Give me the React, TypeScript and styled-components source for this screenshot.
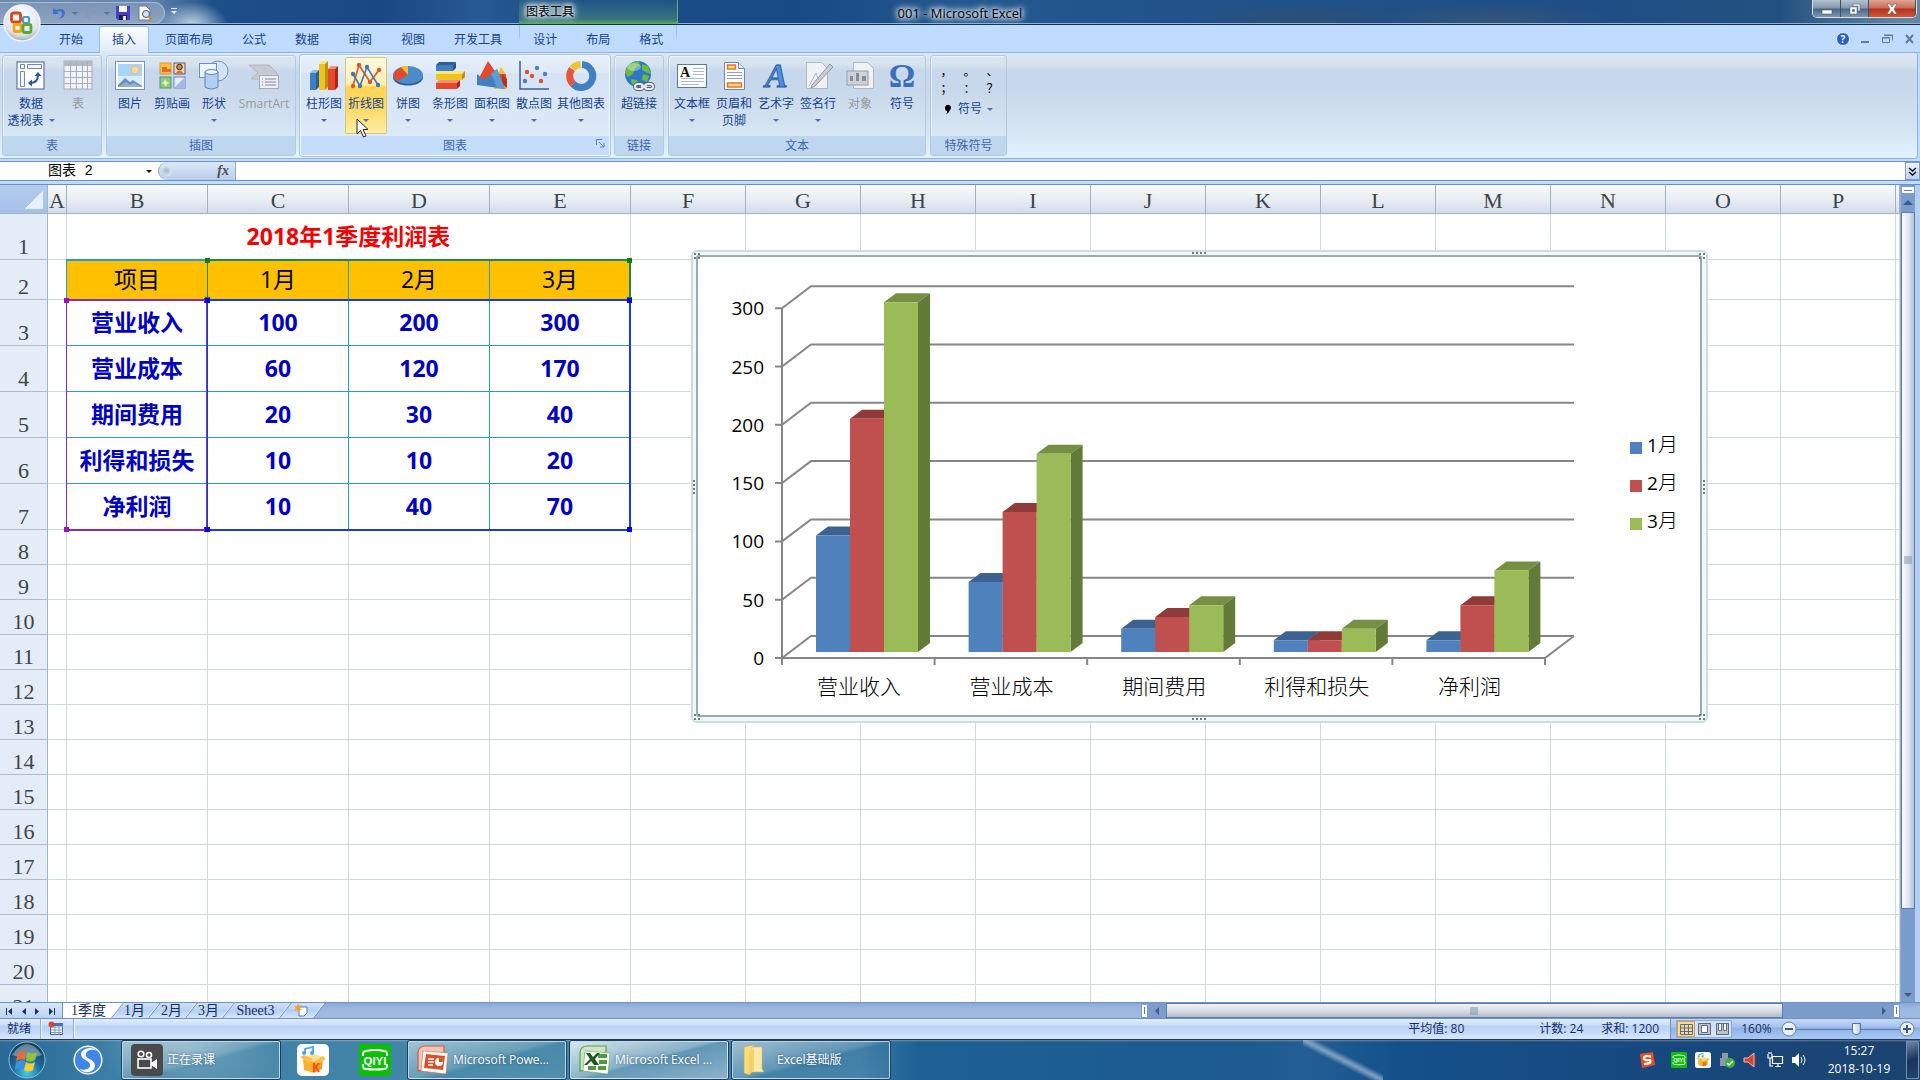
import React from "react";
import styled, { createGlobalStyle, css } from "styled-components";

const UI = `"Open Sans", "Noto Sans CJK SC", sans-serif`;
const SONG = `"Liberation Serif", "Noto Sans CJK SC", serif`;

const Global = createGlobalStyle`
  * { box-sizing: border-box; }
  html, body { margin: 0; padding: 0; }
  body { font-family: ${UI}; font-size: 12px; line-height: 16px; color: #15428b; overflow: hidden; }
  button, input, select { font: inherit; color: inherit; border: 0; background: none; padding: 0; margin: 0; border-radius: 0; outline: 0; }
  svg { display: block; flex: none; overflow: visible; }
`;

const Screen = styled.div`
  height: 100vh;
  display: flex;
  flex-direction: column;
  background: #bfdbff;
  overflow: hidden;
`;

/* ---------- title bar ---------- */
const TitleBar = styled.header`
  position: relative;
  height: 25px;
  flex: none;
  display: flex;
  align-items: stretch;
  border-bottom: 1px solid #1b2c48;
  box-shadow: inset 0 -1px 0 #8fb0d6;
  background:
    radial-gradient(ellipse 36px 22px at 192px 24px, rgba(190, 216, 228, 0.95), transparent),
    radial-gradient(ellipse 110px 14px at 1300px 18px, rgba(60, 80, 100, 0.5), transparent),
    radial-gradient(ellipse 120px 14px at 1490px 18px, rgba(70, 90, 110, 0.55), transparent),
    linear-gradient(90deg, #6d8cb1 0, #6585b0 150px, #1d4f88 215px, #1a4882 380px, #285a94 480px, #1b4c86 560px, #184a84 800px, #24588f 960px, #205188 1300px, #1f4e86 1600px, #23517f 1780px, #6486a0 1900px);
`;
const QuickAccess = styled.div`
  display: flex;
  align-items: center;
  gap: 4px;
  width: 165px;
  margin-top: 2px;
  height: 22px;
  padding-left: 50px;
  border: 1px solid #a9bad0;
  border-left: 0;
  border-radius: 0 11px 11px 0;
  background: linear-gradient(#7b93b5, #8ea4c2);
`;
const QuickButton = styled.button<{ $w?: number }>`
  width: ${(p) => p.$w ?? 18}px;
  height: 18px;
  display: grid;
  place-items: center;
`;
const CustomizeButton = styled(QuickButton)`
  height: 24px;
`;
const Orb = styled.button`
  position: absolute;
  left: 3px;
  top: 4px;
  z-index: 4;
  width: 38px;
  height: 38px;
`;
const ContextTitle = styled.div`
  position: absolute;
  left: 519px;
  top: 0;
  width: 159px;
  height: 24px;
  padding: 4px 7px;
  color: #000;
  border-right: 1px solid #6fa58c;
  background: linear-gradient(rgba(60, 130, 140, 0.15), rgba(84, 150, 120, 0.55) 82%, #5cb04c);
`;
const Glow = styled.span`
  text-shadow: 0 0 4px #fff, 0 0 6px #fff, 0 0 8px #e4eef8, 0 0 10px #cfe0f0;
`;
const WindowTitle = styled.h1`
  position: absolute;
  left: 0;
  right: 0;
  top: 5px;
  margin: 0;
  text-align: center;
  font-size: 13px;
  font-weight: 400;
  line-height: 16px;
  color: #000;
  pointer-events: none;
`;
const WindowButtons = styled.div`
  margin-left: auto;
  margin-right: 3px;
  height: 18px;
  display: flex;
  border: 1px solid #d4dde8;
  border-top: 0;
  border-radius: 0 0 5px 5px;
  overflow: hidden;
`;
const WindowButton = styled.button<{ $close?: boolean }>`
  width: ${(p) => (p.$close ? 47 : 28)}px;
  display: grid;
  place-items: center;
  border-right: 1px solid #3c506c;
  background: ${(p) =>
    p.$close
      ? "linear-gradient(#dca596, #cd6a55 48%, #b5311f 52%, #d0553a)"
      : "linear-gradient(#b4c2d2, #8296ae 48%, #4c6685 52%, #7c97b3)"};
`;

/* ---------- tabs ---------- */
const TabRow = styled.nav`
  height: 28px;
  flex: none;
  display: flex;
  align-items: flex-end;
  gap: 7px;
  padding-left: 48px;
  background: #bfdbff;
  border-bottom: 1px solid #8db2e3;
`;
const Tab = styled.button<{ $active?: boolean }>`
  height: 25px;
  padding: 0 11px;
  white-space: nowrap;
  color: #15428b;
  ${(p) =>
    p.$active &&
    css`
      margin: 0 -1px -1px;
      padding: 0 12px 1px;
      height: 26px;
      border-radius: 3px 3px 0 0;
      background: linear-gradient(#fbfdff, #dfeaf6);
      box-shadow: inset 0 1px 0 #fff, 0 0 1px 1px #9dbce4;
      clip-path: inset(-3px -3px 0 -3px);
    `}
`;
const ContextTabs = styled.div`
  display: flex;
  align-items: flex-end;
  align-self: stretch;
  gap: 7px;
  margin-left: -1px;
  padding: 0 2px;
  border: solid transparent;
  border-width: 0 1px;
  border-image: linear-gradient(#9cc6cf 40%, transparent 60%) 1;
`;
const TabTools = styled.div`
  margin-left: auto;
  height: 26px;
  display: flex;
  align-items: center;
  gap: 8px;
  padding-right: 4px;
`;
const PlainButton = styled.button`
  display: grid;
  place-items: center;
`;

/* ---------- ribbon ---------- */
const Ribbon = styled.section`
  flex: none;
  height: 106px;
  margin: 0 2px 0 0;
  padding: 2px;
  display: flex;
  gap: 4px;
  border-right: 1px solid #8db2e3;
  border-bottom: 1px solid #8fb3dd;
  border-radius: 0 3px 4px 0;
  background: linear-gradient(#dbe8f3 0, #d5e3ee 12px, #c7d7ec 18px, #c9d9ec 40px, #d4e4f1 75px, #e1f3fe 105px);
`;
const Group = styled.div<{ $hot?: boolean }>`
  display: flex;
  flex-direction: column;
  height: 101px;
  border: 1px solid ${(p) => (p.$hot ? "#f2f9ff" : "#b3c9e2")};
  border-radius: 3px;
  box-shadow: ${(p) => (p.$hot ? "0 0 0 1px #a6c4e6" : "inset 1px 1px 0 rgba(255,255,255,.45)")};
  background: ${(p) =>
    p.$hot
      ? "linear-gradient(#e7f0fa 0, #dfe9f7 16px, #d5e3f5 18px, #dfecf8)"
      : "transparent"};
`;
const GroupBody = styled.div`
  flex: 1;
  display: flex;
  padding: 1px 2px;
`;
const GroupName = styled.div<{ $hot?: boolean }>`
  position: relative;
  height: 19px;
  line-height: 19px;
  text-align: center;
  color: #4066a8;
  border-radius: 0 0 2px 2px;
  background: ${(p) => (p.$hot ? "#c4ddfc" : "#bfd7ee")};
`;
const Launcher = styled.button`
  position: absolute;
  right: 4px;
  top: 3px;
`;
const BigButton = styled.button<{ $w?: number; $hot?: boolean; $off?: boolean }>`
  position: relative;
  width: ${(p) => p.$w ?? 42}px;
  height: 77px;
  padding-top: 3px;
  display: flex;
  flex-direction: column;
  align-items: center;
  gap: 3px;
  line-height: 17px;
  white-space: nowrap;
  color: ${(p) => (p.$off ? "#96989c" : "#15428b")};
  border-radius: 2px;
  ${(p) =>
    p.$hot &&
    css`
      background: linear-gradient(#fffbe0 0, #ffeeb0 28px, #ffd454 30px, #ffdc70 55px, #fff0a8);
      box-shadow: inset 0 0 0 1px #dbc681;
    `}
`;
const Lines = styled.span`
  display: flex;
  flex-direction: column;
  align-items: center;
`;
const Line = styled.span`
  display: flex;
  align-items: center;
  gap: 5px;
  min-height: 17px;
`;
const Caret = styled.i<{ $dark?: boolean }>`
  border: 3px solid transparent;
  border-top-color: ${(p) => (p.$dark ? "#111" : "#56709c")};
  border-bottom: 0;
`;
const Symbols = styled.div`
  display: grid;
  grid-template-columns: repeat(3, 23px);
  grid-template-rows: 17px 18px 22px;
  padding: 6px 0 0 2px;
  color: #000;
`;
const SymbolMenu = styled.button`
  grid-column: span 3;
  display: flex;
  align-items: center;
  gap: 5px;
  padding-left: 8px;
  color: #15428b;
`;
const Pointer = styled.span`
  position: absolute;
  left: 11px;
  top: 61px;
  z-index: 3;
`;

/* ---------- formula bar ---------- */
const FormulaBar = styled.div`
  flex: none;
  height: 20px;
  margin: 2px 0 3px;
  display: flex;
  border: solid #6c93c4;
  border-width: 1px 0;
  background: #fff;
`;
const NameBox = styled.input`
  width: 140px;
  padding-left: 48px;
  font-family: "Liberation Mono", "Noto Sans CJK SC", monospace;
  font-size: 14px;
  color: #000;
`;
const FxStrip = styled.div`
  width: 78px;
  display: flex;
  justify-content: space-between;
  align-items: center;
  padding: 0 6px 0 4px;
  border: 1px solid #8fa9ce;
  border-width: 0 1px;
  border-radius: 9px 0 0 9px;
  background: linear-gradient(#dce8f8, #b7cdeb);
`;
const Knob = styled.i`
  width: 9px;
  height: 9px;
  border-radius: 50%;
  background: radial-gradient(circle at 35% 40%, #a6b5c9, #f4f8fd);
`;
const Fx = styled.button`
  font-family: "Liberation Serif", serif;
  font-style: italic;
  font-weight: 700;
  font-size: 14px;
  line-height: 16px;
  color: #4a4f58;
`;
const FormulaInput = styled.input`
  flex: 1;
  min-width: 0;
  padding: 0 4px;
  color: #000;
`;
const Expand = styled.button`
  width: 15px;
  display: grid;
  place-items: center;
  border: 1px solid #7f9ec9;
  background: linear-gradient(#eaf2fd, #bcd2f0);
`;

/* ---------- sheet ---------- */
const Work = styled.main`
  flex: 1;
  min-height: 0;
  display: flex;
  border-top: 1px solid #6c8ebf;
  background: #bfdbff;
`;
const Sheet = styled.div`
  position: relative;
  flex: 1;
  min-width: 0;
  overflow: hidden;
  background: #fff;
`;
const Grid = styled.table`
  width: 100%;
  table-layout: fixed;
  border-collapse: separate;
  border-spacing: 0;
  th, td { padding: 0; overflow: hidden; white-space: nowrap; }
`;
const ColHead = styled.th`
  height: 29px;
  font: 400 22px/24px ${SONG};
  vertical-align: bottom;
  color: #3c444c;
  border-right: 1px solid #a5b1c0;
  border-bottom: 1px solid #9eb6ce;
  background: linear-gradient(#f8fbfd, #e9eef4 50%, #d3dce8);
`;
const Corner = styled.th`
  border-right: 1px solid #9eb6ce;
  border-bottom: 1px solid #9eb6ce;
  background: linear-gradient(135deg, transparent 50%, #e6effa 51%) 24px 6px / 19px 18px no-repeat, linear-gradient(#b4cdec, #a4c0e8);
`;
const RowHead = styled.th`
  font: 400 22px/24px ${SONG};
  vertical-align: bottom;
  color: #3c444c;
  border-right: 1px solid #9eb6ce;
  border-bottom: 1px solid #aebccb;
  background: #e4ecf7;
`;
const Row = styled.tr<{ $h: number }>`
  height: ${(p) => p.$h}px;
`;
const Cell = styled.td<{ $kind?: "title" | "head" | "data" }>`
  border-right: 1px solid #d2d8e0;
  border-bottom: 1px solid #d2d8e0;
  && { padding-bottom: 2px; }
  text-align: center;
  font-size: 23px;
  line-height: 32px;
  ${(p) => p.$kind === "title" && css`color: #f40000; font-weight: 700; border-bottom-color: #2a9cc0;`}
  ${(p) => p.$kind === "head" && css`color: #000; background: #ffc000; border-color: #2a9cc0;`}
  ${(p) => p.$kind === "data" && css`color: #0000c0; font-weight: 700; border-color: #2a9cc0;`}
`;
const RangeFrame = styled.div<{ $x: number; $y: number; $w: number; $h: number; $line: string; $handle: string }>`
  position: absolute;
  left: ${(p) => p.$x}px;
  top: ${(p) => p.$y}px;
  width: ${(p) => p.$w}px;
  height: ${(p) => p.$h}px;
  border: 2px solid ${(p) => p.$line};
  border-left-width: 1px;
  pointer-events: none;
  &::after {
    content: "";
    position: absolute;
    inset: -3px;
    --d: linear-gradient(${(p) => p.$handle}, ${(p) => p.$handle});
    background: var(--d) 0 0 / 5px 5px, var(--d) 100% 0 / 5px 5px, var(--d) 0 100% / 5px 5px, var(--d) 100% 100% / 5px 5px;
    background-repeat: no-repeat;
  }
`;
const ChartFrame = styled.figure`
  position: absolute;
  left: 691px;
  top: 65px;
  margin: 0;
`;

/* ---------- scroll bars ---------- */
const VScroll = styled.div`
  width: 20px;
  flex: none;
  display: flex;
  flex-direction: column;
  align-items: stretch;
  gap: 2px;
  padding: 1px 5px 0 1px;
  background: linear-gradient(90deg, #8fadd8 0 1px, #7c9ccb 1px 15px, #b4cff2 15px);
`;
const SplitBox = styled.div<{ $side?: boolean }>`
  flex: none;
  background: #fff;
  border: 1px solid #7c9ccb;
  display: grid;
  place-items: center;
  ${(p) => (p.$side ? "width: 7px; height: 14px;" : "height: 8px;")}
`;
const ScrollArrow = styled.button`
  flex: none;
  width: 14px;
  height: 14px;
  display: grid;
  place-items: center;
`;
const VTrack = styled.div`
  flex: 1;
  min-height: 0;
`;
const VThumb = styled.div`
  height: 90%;
  display: grid;
  place-items: center;
  border: 1px solid #5c7dab;
  border-radius: 1px;
  background: linear-gradient(90deg, #fbfcfe, #e0e7f0 50%, #b6c3d6);
`;
const Bottom = styled.div`
  flex: none;
  height: 17px;
  display: flex;
  align-items: stretch;
  border-top: 1px solid #6d92c4;
  border-bottom: 1px solid #6d92c4;
  background: linear-gradient(#8ba9d6, #9db8e0 40%, #9fb9df);
`;
const TabNav = styled.div`
  width: 63px;
  display: flex;
  justify-content: space-between;
  padding: 0 6px 0 5px;
  background: linear-gradient(#d8e6f8, #bcd3f1);
  border-right: 1px solid #6d92c4;
`;
const SheetTab = styled.button<{ $w: number; $active?: boolean }>`
  position: relative;
  z-index: 0;
  width: ${(p) => p.$w}px;
  display: flex;
  align-items: center;
  justify-content: center;
  padding-right: 4px;
  font: 400 14px/15px ${SONG};
  color: #15305e;
  &::before {
    content: "";
    position: absolute;
    z-index: -1;
    inset: 0 ${(p) => (p.$active ? "0 0 -8px" : "0")};
    transform: skewX(-38deg);
    border-right: 1px solid #6d8fc0;
    box-shadow: inset -1px 0 0 #eef5ff;
    background: ${(p) => (p.$active ? "#fff" : "linear-gradient(#cfe0f7, #b7d0f2 50%, #d5e5fa)")};
  }
`;
const SheetTabs = styled.div`
  display: flex;
  overflow: hidden;
  padding-right: 12px;
`;
const HScroll = styled.div`
  width: 759px;
  margin-left: auto;
  margin-right: 20px;
  display: flex;
  align-items: center;
  gap: 2px;
  background: #7c9ccb;
`;
const HTrack = styled.div`
  flex: 1;
  align-self: stretch;
`;
const HThumb = styled.div`
  width: 87%;
  height: 15px;
  display: grid;
  place-items: center;
  border: 1px solid #5c7dab;
  background: linear-gradient(#f0f3f8, #dce1e9 45%, #b3bccb);
`;

/* ---------- status bar ---------- */
const StatusBar = styled.footer`
  flex: none;
  height: 21px;
  display: flex;
  align-items: center;
  color: #0e2f6c;
  background: linear-gradient(#e0edfd 0, #cbdff8 6px, #b6d0f5 7px, #c9dcf7 14px, #d8e6fa);
  border-bottom: 1px solid #20375c;
`;
const StatusCell = styled.span<{ $w: number }>`
  width: ${(p) => p.$w}px;
  height: 20px;
  display: flex;
  align-items: center;
  padding-left: 7px;
  border-right: 1px solid #8fb0de;
  box-shadow: 1px 0 0 #eef5ff;
`;
const Totals = styled.div`
  margin-left: auto;
  display: flex;
  padding-right: 11px;
`;
const Total = styled.span<{ $gap?: number }>`
  margin-left: ${(p) => p.$gap ?? 0}px;
`;
const ZoomArea = styled.div`
  width: 250px;
  height: 20px;
  display: flex;
  align-items: center;
  padding-left: 5px;
  border-left: 1px solid #6d92c4;
  background: linear-gradient(#c5d9f5, #a3c1ee 40%, #8fb2e6 45%, #a9c8f2);
`;
const Views = styled.div`
  display: flex;
  height: 18px;
  width: 56px;
  border: 1px solid #8ca9d3;
  background: #d3e1f4;
`;
const ViewButton = styled.button<{ $on?: boolean }>`
  flex: 1;
  display: grid;
  place-items: center;
  ${(p) => p.$on && "background: #fbd894; box-shadow: inset 0 0 0 1px #c8a45c;"}
`;
const Percent = styled.button`
  width: 49px;
  text-align: center;
  color: #15305e;
`;
const Slider = styled.input`
  appearance: none;
  width: 102px;
  height: 16px;
  background: linear-gradient(#5c7cab, #5c7cab) 0 8px / 100% 1px no-repeat;
  &::-webkit-slider-thumb {
    appearance: none;
    width: 9px;
    height: 12px;
    background: linear-gradient(90deg, #fff, #b9cbe4);
    border: 1px solid #52709e;
    border-radius: 1px 1px 5px 5px;
  }
`;

/* ---------- task bar ---------- */
const TaskBar = styled.div`
  flex: none;
  height: 40px;
  display: flex;
  align-items: center;
  color: #fff;
  background:
    linear-gradient(rgba(255, 255, 255, 0.3), transparent 2px),
    radial-gradient(ellipse 90px 50px at 190px 10px, rgba(150, 190, 205, 0.5), transparent),
    linear-gradient(90deg, #2a6a98, #3c7ea4 110px, #4488a8 500px, #3a7ba4 860px, #1d6094 920px, #1c5a90 1240px, #235e94 1310px, #14508a 1400px, #17497f 1640px, #1c436f);
`;
const Streak = styled.i`
  width: 80px;
  height: 40px;
  margin-left: auto;
  margin-right: 256px;
  background: linear-gradient(27deg, transparent 42%, rgba(180, 200, 218, 0.6) 49%, rgba(180, 200, 218, 0.6) 51%, transparent 58%);
`;
const TaskIcon = styled.button<{ $w: number }>`
  width: ${(p) => p.$w}px;
  height: 40px;
  display: grid;
  place-items: center;
`;
const TaskButton = styled.button<{ $on?: boolean }>`
  width: 158px;
  height: 38px;
  margin-right: 4px;
  padding-left: 8px;
  display: flex;
  align-items: center;
  gap: 4px;
  color: #fff;
  white-space: nowrap;
  text-shadow: 0 0 3px rgba(10, 40, 70, 0.6);
  border: 1px solid rgba(220, 236, 246, 0.75);
  border-radius: 2px;
  box-shadow: 0 0 0 1px #1d3f60;
  background: ${(p) =>
    p.$on
      ? "linear-gradient(165deg, rgba(255,255,255,.8), rgba(255,255,255,.38) 48%, rgba(255,255,255,.18) 52%, rgba(255,255,255,.4))"
      : "linear-gradient(165deg, rgba(255,255,255,.5), rgba(255,255,255,.2) 48%, rgba(255,255,255,.04) 54%, rgba(255,255,255,.08))"};
`;
const Tray = styled.div`
  display: flex;
  align-items: center;
  gap: 8px;
`;
const InputMethod = styled.button`
  margin-right: 8px;
`;
const Clock = styled.time`
  width: 88px;
  text-align: center;
  line-height: 18px;
`;
const ShowDesktop = styled.button`
  width: 13px;
  height: 38px;
  margin: 0 1px 0 3px;
  border: 1px solid #6f8fb3;
  background: linear-gradient(160deg, #6d86a6, #17345c 50%, #23466f);
`;

/* ---------- icon drawings ---------- */
type Draw = React.ReactNode;
const Svg = ({ s = 32, w, h, vb, children }: { s?: number; w?: number; h?: number; vb?: string; children: Draw }) => (
  <svg width={w ?? s} height={h ?? s} viewBox={vb ?? `0 0 ${w ?? s} ${h ?? s}`} aria-hidden="true">{children}</svg>
);
const Box3 = ({ x, y, w, h, c, t, r }: { x: number; y: number; w: number; h: number; c: string; t: string; r: string }) => (
  <g>
    <path d={`M${x} ${y}h${w}v${h}h-${w}z`} fill={c} />
    <path d={`M${x} ${y}l3-3h${w}l-3 3z`} fill={t} />
    <path d={`M${x + w} ${y}l3-3v${h}l-3 3z`} fill={r} />
  </g>
);

const icons: Record<string, Draw> = {
  pivot: <Svg><rect x="2" y="2" width="27" height="27" fill="#fff" stroke="#5a78a8" strokeWidth="1.200" /><path d="M5.500 4.500h4v4h-4zM12.500 4.500h14v4h-14zM5.500 11.500h4v15h-4z" fill="#f3f6fb" stroke="#7388aa" /><path d="M15 23q8 0 8-8" fill="none" stroke="#2b56a8" strokeWidth="2" /><path d="M19.500 16l3.500-4 3.500 4zM17 19.500v7l-4-3.500z" fill="#2b56a8" /></Svg>,
  table: <Svg><rect x="2" y="1" width="28" height="28" fill="#f1f3f6" stroke="#a6aeb9" /><rect x="2" y="1" width="28" height="5" fill="#b4bac3" /><path d="M2 11.500h28M2 17.500h28M2 23.500h28M8.500 1v28M14.500 1v28M20.500 1v28M25.500 1v28" stroke="#a6aeb9" /></Svg>,
  picture: <Svg><rect x="1.500" y="1.500" width="29" height="28" fill="#fff" stroke="#7892b8" /><rect x="4" y="4" width="24" height="23" fill="#a9d3f7" /><path d="M4 16h24v11H4z" fill="#d8ecfb" /><circle cx="21" cy="10" r="4" fill="#ffd9a0" stroke="#f3b27c" /><path d="M4 25l7-7 5 4 3-2 9 6v1H4z" fill="#6c8fbe" /><path d="M4 27l8-5 4 3 4-2 8 4z" fill="#92b1d6" /></Svg>,
  clip: <Svg><rect x="4" y="3" width="11" height="11" fill="#f8c43c" stroke="#e0903c" /><path d="M6 7h5v2h4v3H6z" fill="#ea6a2a" /><rect x="18" y="3" width="11" height="11" fill="#f7d9ad" stroke="#5a5a66" /><circle cx="23.500" cy="7" r="2.800" fill="#c9854a" stroke="#3a2a22" /><path d="M19.500 13.500q4-6 8 0z" fill="#e06a28" /><rect x="4" y="17" width="11" height="11" fill="#8fc88a" stroke="#4a9a68" /><path d="M9 19l2 3 3 1-3 1-1 3-2-3-3-1 3-1z" fill="#f4f39a" /><rect x="18" y="17" width="11" height="11" fill="#e9edfb" stroke="#6a7fc4" /><path d="M18 28l11-11v11z" fill="#a9b7e8" /></Svg>,
  shapes: <Svg><circle cx="20" cy="11" r="10" fill="#d5e4f5" stroke="#6d8fc0" /><rect x="1.500" y="3.500" width="17" height="14" fill="#eef4fc" stroke="#6d8fc0" /><path d="M7 12v15q6 4 13 0V12z" fill="#b4cff0" stroke="#5c82b8" /><ellipse cx="13.500" cy="12" rx="6.500" ry="2.500" fill="#eaf3fd" stroke="#5c82b8" /></Svg>,
  smart: <Svg><path d="M1 5h20l9 9-6 5H3l7-6z" fill="#c6cbd3" stroke="#b0b6c0" /><rect x="11.500" y="15.500" width="19" height="13" fill="#eceef2" stroke="#a4abb6" /><path d="M17 19h11M17 22h11M17 25h11M14 19h1M14 22h1M14 25h1" stroke="#a4abb6" strokeWidth="1.500" /></Svg>,
  column: <Svg><Box3 x={2} y={13} w={6} h={17} c="#3f7fc0" t="#8fbce6" r="#2a5f99" /><Box3 x={11} y={4} w={6} h={26} c="#efc41e" t="#fbe67a" r="#b8930c" /><Box3 x={20} y={9} w={7} h={21} c="#e4492c" t="#f49076" r="#a82a16" /></Svg>,
  line: <Svg><path d="M3 26l6-21 11 17 9-12" fill="none" stroke="#e0552f" strokeWidth="1.600" /><path d="M3 14l7 12 7-19 11 18" fill="none" stroke="#3d78b6" strokeWidth="1.600" />{[[3, 26], [9, 5], [20, 22], [29, 10]].map(([x, y]) => <circle key={x} cx={x} cy={y} r="2.200" fill="#e0552f" />)}{[[3, 14], [10, 26], [17, 7], [28, 25]].map(([x, y]) => <circle key={x} cx={x} cy={y} r="2.200" fill="#3d78b6" />)}</Svg>,
  pie: <Svg><path d="M1 15v3c2 10 28 10 30 0v-3z" fill="#2d5c91" /><ellipse cx="16" cy="15" rx="15" ry="9" fill="#4b8acb" /><path d="M16 15L5 21Q-3 14 9 7z" fill="#e4492c" /><path d="M16 15L9 7q3-1 7-1z" fill="#efc41e" /></Svg>,
  bar: <Svg><Box3 x={2} y={5} w={17} h={6} c="#3f7fc0" t="#2a5f99" r="#24558c" /><Box3 x={2} y={14} w={26} h={6} c="#efc41e" t="#fbe67a" r="#b8930c" /><Box3 x={2} y={23} w={21} h={6} c="#e4492c" t="#f49076" r="#a82a16" /></Svg>,
  area: <Svg><path d="M18 24l7-17 6 10v12H18z" fill="#efc41e" /><path d="M2 20L12 1l9 13 9 0v12z" fill="#e4492c" /><path d="M26 14l5 5v9l-5-4z" fill="#b8321c" /><path d="M1 14l7 6 13-11 8 20L1 25z" fill="#4180c0" /><path d="M21 9l8 20-8-1.200-6-14z" fill="#5f9ad4" /></Svg>,
  scatter: <Svg><path d="M2 1v28h29" fill="none" stroke="#3e5f8c" strokeWidth="1.500" /><g fill="#d8523a"><circle cx="9" cy="12" r="2.200" /><circle cx="14" cy="16" r="2.200" /><circle cx="23" cy="21" r="2.200" /></g><g fill="#4d82b6"><circle cx="19" cy="8" r="2.200" /><circle cx="27" cy="14" r="2.200" /><circle cx="7" cy="21" r="2.200" /></g></Svg>,
  donut: <Svg><g fill="none" strokeWidth="7"><path d="M17 4.500a11.500 11.500 0 1 1-9 19.500" stroke="#4180c0" /><path d="M8 24a11.500 11.500 0 0 1-1-15" stroke="#e4553a" /><path d="M7.500 8.500a11.500 11.500 0 0 1 8-4" stroke="#efc42e" /></g></Svg>,
  link: <Svg><circle cx="15" cy="14" r="13" fill="#2d76c8" /><path d="M4 7q6-6 12-6l1 4-5 3-2 6-5 3-3-4zM19 4l6 2 3 8-4-1-5-3zM8 19l6 1 3 5-3 2q-7-3-6-8zM20 14l6 2-2 6-5-2z" fill="#6cba3e" /><ellipse cx="11" cy="7" rx="7" ry="4" fill="#fff" opacity=".35" /><g fill="none" stroke="#556277" strokeWidth="4"><rect x="12" y="24" width="8" height="5" rx="2.500" /><rect x="22" y="24" width="8" height="5" rx="2.500" /></g><g fill="none" stroke="#e9edf3" strokeWidth="2"><rect x="12" y="24" width="8" height="5" rx="2.500" /><rect x="22" y="24" width="8" height="5" rx="2.500" /><path d="M18 26.500h6" /></g></Svg>,
  textbox: <Svg><rect x="1.500" y="4.500" width="29" height="23" fill="#fff" stroke="#5a78a8" /><path d="M17 8.500h11M17 11.500h11M17 14.500h11M5 18.500h23M5 21.500h23M5 24.500h18" stroke="#a9bad2" /><text x="4" y="17" fontFamily="Liberation Serif" fontWeight="700" fontSize="14" fill="#111">A</text></Svg>,
  header: <Svg><path d="M6.500 2.500h14l6 6v21h-20z" fill="#fff" stroke="#6f87ab" /><path d="M20.500 2.500v6h6" fill="#dce6f3" stroke="#6f87ab" /><rect x="9.500" y="5" width="8" height="4" fill="#fbd08c" stroke="#e8781c" strokeWidth="1.500" /><rect x="9.500" y="23" width="14" height="4" fill="#fbd08c" stroke="#e8781c" strokeWidth="1.500" /><path d="M9 12.500h15M9 15.500h15M9 18.500h15" stroke="#8ba0c4" /></Svg>,
  art: <Svg><text x="5" y="27" fontFamily="Liberation Serif" fontStyle="italic" fontWeight="700" fontSize="34" fill="#4f8fdc" stroke="#24509a" strokeWidth=".8">A</text></Svg>,
  sign: <Svg><path d="M4.500 2.500h15l6 6v20h-21z" fill="#eef1f5" stroke="#b0b7c2" /><path d="M10 25l18-21 3 3-18 19-4 2z" fill="#c9ced6" stroke="#8f97a4" /><path d="M7 26l7-13 3 8" fill="none" stroke="#b4bac4" /></Svg>,
  object: <Svg><path d="M9.500 2.500h14l6 6v20h-20z" fill="#eef1f5" stroke="#b0b7c2" /><rect x="3" y="11" width="21" height="14" fill="#ced2d9" stroke="#979faa" /><path d="M6 21v-5h3v5M12 21v-8h3v8M18 16h4v5h-4z" fill="#868e9a" /></Svg>,
  omega: <Svg><text x="16" y="27" textAnchor="middle" fontFamily="Liberation Serif" fontWeight="700" fontSize="33" fill="#3a6fbe">Ω</text></Svg>,
};

const Sogou = ({ s }: { s: number }) => (
  <Svg s={s} vb="0 0 32 32"><circle cx="16" cy="16" r="15.500" fill="#fff" /><circle cx="16" cy="16" r="14" fill="#3f86ea" /><path d="M25 6C19 0 6 5 9 12c2 5 11 5 9 11-2 4-8 4-11 2 6 8 19 3 16-5-2-6-11-5-9-11 1-4 7-5 11-3z" fill="#fff" /></Svg>
);
const Iqiyi = ({ s }: { s: number }) => (
  <Svg s={s} vb="0 0 32 32"><rect width="32" height="32" rx="2" fill="#0bbe06" /><path d="M4 10q0-3 3-3 9-2 18 0 3 0 3 3M4 22q0 3 3 3 9 1 18 0 3 0 3-3M4 10v2M28 10v2M4 20v2M28 20v2" fill="none" stroke="#fff" strokeWidth="1.800" /><text x="16" y="20.500" textAnchor="middle" fontFamily="Liberation Sans" fontWeight="700" fontSize="11.500" fill="#fff">QIYI</text></Svg>
);
const Kuwo = ({ s }: { s: number }) => (
  <Svg s={s} vb="0 0 32 32"><rect width="32" height="32" rx="5" fill="#fff" /><path d="M6 14l11-4 9 3-9 5z" fill="#ffe08a" /><path d="M6 14l11 4v11L7 26z" fill="#fbb12e" /><path d="M17 18l9-5-1 12-8 4z" fill="#f79a1c" /><path d="M3 13l4-2 9 4-4 4z" fill="#fcc04a" /><path d="M17 18l9-6 3 3-8 5z" fill="#fcc04a" /><text x="15" y="28" fontFamily="Open Sans" fontWeight="700" fontSize="12" fill="#f0501e">K</text><path d="M8 9V5l8-2v6" fill="none" stroke="#4aa6e0" strokeWidth="1.800" /><circle cx="7" cy="9" r="2" fill="#4aa6e0" /><circle cx="15" cy="9" r="2" fill="#4aa6e0" /></Svg>
);
const Recorder = () => (
  <Svg><rect width="32" height="32" rx="4" fill="#4a4a4c" /><g fill="none" stroke="#fff" strokeWidth="1.600"><circle cx="10" cy="10" r="2.800" /><circle cx="18" cy="11" r="2.500" /><rect x="7" y="15" width="13" height="9" /></g><path d="M20 19l6-4v10l-6-4z" fill="#fff" /></Svg>
);
const OfficeDoc = ({ c, kind }: { c: string; kind: "p" | "x" }) => (
  <Svg><path d="M1 27V8q1-6 7-6h19v20z" fill={kind === "p" ? "#f8c9b4" : "#cfe6c4"} stroke={c} strokeWidth="1.200" opacity=".9" /><path d="M6 7l25 2-2 21-25-3z" fill="#fff" stroke={c} strokeWidth=".5" /><path d={kind === "p" ? "M9 10l19 2-2 14-19-2z" : "M19 10h9v4h-9zM20 16h8v4h-8zM19 22h8v4h-8zM9 22h8v4H9z"} fill={c} />{kind === "p" ? <g><path d="M11 15h6M11 18h6M11 21h5" stroke="#fff" strokeWidth="1.500" /><circle cx="22" cy="18" r="4" fill="#fff" /><path d="M22 18v-4a4 4 0 0 1 4 4z" fill={c} /></g> : <path d="M7 9h4l3 4 4-4h3l-5 6 4 6h-5l-3-4-4 4H5l6-6z" fill="#1c5a1e" />}</Svg>
);
const Folder = () => (
  <Svg><path d="M3 3l9-2v26l-4 4-5-2z" fill="#f6dd7e" stroke="#c9a94a" strokeWidth=".6" /><path d="M11 3h10v22l2 3H9z" fill="#fbeaa4" stroke="#d3b557" strokeWidth=".6" /><path d="M8 8l5-4v22l-5 5z" fill="#f2d26a" /></Svg>
);
const Flag = () => (
  <Svg s={38}><defs><radialGradient id="start" cx="50%" cy="85%" r="80%"><stop offset="0" stopColor="#3fd0f0" /><stop offset=".5" stopColor="#1b6c9c" /><stop offset="1" stopColor="#1b3a58" /></radialGradient></defs><circle cx="19" cy="19" r="18" fill="url(#start)" stroke="#8fc0d6" /><path d="M4 14Q19-8 34 14q-15 6-30 0z" fill="#fff" opacity=".35" /><path d="M10 12q4-3 8-1l-1 8q-4-2-9 1z" fill="#ee6a35" /><path d="M20 11q4 3 9 0l-2 8q-5 3-9 0z" fill="#8fc43c" /><path d="M8 21q5-3 9-1l-1 8q-4-2-9 1z" fill="#3e8fe0" /><path d="M18 21q4 3 9 0l-2 8q-5 3-9 0z" fill="#fccb2e" /></Svg>
);
const OfficeLogo = () => (
  <Svg s={38}><defs><radialGradient id="orb" cx="50%" cy="30%" r="75%"><stop offset="0" stopColor="#fff" /><stop offset=".7" stopColor="#dfe4ea" /><stop offset="1" stopColor="#8f9aa8" /></radialGradient></defs><circle cx="19" cy="19" r="18" fill="url(#orb)" stroke="#eef3f8" strokeWidth="1.500" /><g fill="none" strokeWidth="2.800"><rect x="8.500" y="9" width="9" height="9" rx="2" stroke="#d8481c" /><rect x="20" y="13" width="6" height="6" rx="1" stroke="#4c9ad8" strokeWidth="2.200" /><rect x="11" y="20.500" width="7" height="7" rx="1" stroke="#f0a818" /><rect x="20" y="20.500" width="8" height="8" rx="2" stroke="#5aa83a" /></g></Svg>
);
const Tri = ({ d, c = "#3f5a86" }: { d: string; c?: string }) => <Svg s={10}><path d={d} fill={c} /></Svg>;

/* ---------- data ---------- */
const columns: [string, number][] = [
  ["A", 19], ["B", 141], ["C", 141], ["D", 141], ["E", 141],
  ...("FGHIJKLMNOP".split("").map((l) => [l, 115]) as [string, number][]),
];
const months = ["1月", "2月", "3月"];
const profit: [string, number[]][] = [
  ["营业收入", [100, 200, 300]],
  ["营业成本", [60, 120, 170]],
  ["期间费用", [20, 30, 40]],
  ["利得和损失", [10, 10, 20]],
  ["净利润", [10, 40, 70]],
];
const series = [
  { front: "#4f81bd", top: "#3b6290" },
  { front: "#c0504d", top: "#903b39" },
  { front: "#9bbb59", top: "#759042" },
];

const Bars = () => (
  <g>
    {profit.map(([name, values], g) =>
      values.map((v, i) => {
        const x = 125 + g * 152.6 + i * 34;
        const base = 402;
        const y = base - v * 1.166;
        const side = i === 2 ? "#637b38" : series[i].top;
        return (
          <g key={name + i}>
            <path d={`M${x} ${y}l12-9h34l-12 9z`} fill={series[i].top} />
            <path d={`M${x + 34} ${y}l12-9V${base - 9}l-12 9z`} fill={side} />
            <path d={`M${x} ${y}h34V${base}h-34z`} fill={series[i].front} />
          </g>
        );
      })
    )}
  </g>
);

const Dots = ({ x, y, v }: { x: number; y: number; v?: boolean }) => (
  <g fill="#6f7f80">{[0, 4, 8, 12].map((d) => <rect key={d} x={v ? x : x + d} y={v ? y + d : y} width="2" height="2" />)}</g>
);

const Chart = () => (
  <svg width="1017" height="473" role="img" aria-label="营业收入 营业成本 期间费用 利得和损失 净利润">
    <rect x="1" y="1" width="1015" height="471" rx="5" fill="#ecfaf9" stroke="#ccdddb" strokeWidth="2" />
    <rect x="6" y="6" width="1004" height="460" rx="2" fill="#fff" stroke="#9caaaa" strokeWidth="2" />
    <g fill="none" stroke="#868686" strokeWidth="2">
      {[0, 1, 2, 3, 4, 5, 6].map((i) => {
        const y = 408 - i * 58.3;
        return <path key={i} d={`M84 ${y}h7l29-22H883`} />;
      })}
      <path d="M91 58V408H854l29-22" />
      {[0, 1, 2, 3, 4, 5].map((i) => <path key={i} d={`M${91 + i * 152.6} 408v7`} />)}
    </g>
    <Bars />
    <g fontFamily="Open Sans, Noto Sans CJK SC" fontSize="19" fill="#000">
      {[0, 1, 2, 3, 4, 5, 6].map((i) => <text key={i} x="73" y={415 - i * 58.3} textAnchor="end">{i * 50}</text>)}
      {profit.map(([name], g) => <text key={name} x={168 + g * 152.6} y="444" textAnchor="middle" fontSize="21" fontWeight="300">{name}</text>)}
      {months.map((m, i) => (
        <g key={m}>
          <rect x="939" y={192 + i * 38} width="12" height="12" fill={series[i].front} />
          <text x="956" y={202 + i * 38}>{m[0]}<tspan fontSize="20" fontWeight="300">{m[1]}</tspan></text>
        </g>
      ))}
    </g>
    <Dots x={501} y={2} /><Dots x={501} y={468} /><Dots x={2} y={230} v /><Dots x={1012} y={230} v />
    <g fill="#6f7f80">{[[3, 3], [1008, 3], [3, 464], [1008, 464]].map(([x, y]) => <path key={`${x}-${y}`} d={`M${x} ${y}h2v2h-2zm4 0h2v2h-2zm-4 4h2v2h-2zm4 0h2v2h-2z`} />)}</g>
  </svg>
);

type Btn = { icon: string; text: string[]; w?: number; off?: boolean; hot?: boolean; caret?: "below" | "beside" };
const groups: { name: string; hot?: boolean; items: Btn[] }[] = [
  { name: "表", items: [{ icon: "pivot", text: ["数据", "透视表"], w: 52, caret: "beside" }, { icon: "table", text: ["表"], off: true }] },
  { name: "插图", items: [{ icon: "picture", text: ["图片"] }, { icon: "clip", text: ["剪贴画"] }, { icon: "shapes", text: ["形状"], caret: "below" }, { icon: "smart", text: ["SmartArt"], w: 58, off: true }] },
  { name: "图表", hot: true, items: [
    { icon: "column", text: ["柱形图"], caret: "below" }, { icon: "line", text: ["折线图"], caret: "below", hot: true },
    { icon: "pie", text: ["饼图"], caret: "below" }, { icon: "bar", text: ["条形图"], caret: "below" },
    { icon: "area", text: ["面积图"], caret: "below" }, { icon: "scatter", text: ["散点图"], caret: "below" },
    { icon: "donut", text: ["其他图表"], w: 52, caret: "below" },
  ] },
  { name: "链接", items: [{ icon: "link", text: ["超链接"], w: 44 }] },
  { name: "文本", items: [
    { icon: "textbox", text: ["文本框"], caret: "below" }, { icon: "header", text: ["页眉和", "页脚"] },
    { icon: "art", text: ["艺术字"], caret: "below" }, { icon: "sign", text: ["签名行"], caret: "below" },
    { icon: "object", text: ["对象"], off: true }, { icon: "omega", text: ["符号"] },
  ] },
];

const RibbonButton = ({ b }: { b: Btn }) => (
  <BigButton $w={b.w} $hot={b.hot} $off={b.off} disabled={b.off}>
    {icons[b.icon]}
    <Lines>
      {b.text.map((t, i) => (
        <Line key={t}>{t}{b.caret === "beside" && i === b.text.length - 1 && <Caret />}</Line>
      ))}
      {b.caret === "below" && <Line><Caret /></Line>}
    </Lines>
    {b.hot && (
      <Pointer>
        <Svg w={13} h={20}><path d="M1 1v15l3.500-3.500 3 6.500 2.500-1-3-6.500h5z" fill="#fff" stroke="#222" /></Svg>
      </Pointer>
    )}
  </BigButton>
);

const Blank = ({ n }: { n: number }) => <>{Array.from({ length: n }, (_, i) => <Cell key={i} />)}</>;

export default function App() {
  return (
    <Screen>
      <Global />
      <TitleBar>
        <Orb aria-label="Office"><OfficeLogo /></Orb>
        <QuickAccess>
          <QuickButton aria-label="撤消"><Svg s={14}><path d="M1 2v6h6L5 6q5-2 5 2 0 3-4 5 7-1 7-6-1-6-9-3z" fill="#3f6fd8" /></Svg></QuickButton>
          <QuickButton $w={6} aria-label="撤消列表"><Caret /></QuickButton>
          <QuickButton aria-label="恢复"><Svg s={14}><path d="M13 2v6H7l2-2Q4 4 4 8q0 3 4 5-7-1-7-6 1-6 9-3z" fill="#8398b4" /></Svg></QuickButton>
          <QuickButton $w={6} aria-label="恢复列表"><Caret /></QuickButton>
          <QuickButton aria-label="保存"><Svg s={14}><path d="M0 0h14v14H2l-2-2z" fill="#4a3fc4" /><path d="M3 0h8v6H3z" fill="#f4f6fb" /><path d="M3 9h8v5H3z" fill="#20204c" /><path d="M7 10h3v4H7z" fill="#dfe5f0" /></Svg></QuickButton>
          <QuickButton aria-label="打印预览"><Svg s={14}><path d="M1 0h7l4 4v10H1z" fill="#fff" stroke="#69788e" /><circle cx="8" cy="8" r="3.500" fill="#cfe4f8" stroke="#44536b" /><path d="M10 10l4 4" stroke="#c8862e" strokeWidth="2" /></Svg></QuickButton>
        </QuickAccess>
        <CustomizeButton aria-label="自定义"><Svg s={8}><path d="M1 0h6v1H1zM1 3h6L4 6z" fill="#dfe9f5" /></Svg></CustomizeButton>
        <ContextTitle><Glow>图表工具</Glow></ContextTitle>
        <WindowTitle><Glow>001 - Microsoft Excel</Glow></WindowTitle>
        <WindowButtons>
          <WindowButton aria-label="最小化"><Svg w={12} h={12}><rect x="1" y="7" width="10" height="4" fill="#fff" stroke="#46566e" strokeWidth=".6" /></Svg></WindowButton>
          <WindowButton aria-label="还原"><Svg w={12} h={12}><path d="M4 1h7v7H9V3H4zM1 4h7v7H1zM3.500 6.500v2h2v-2z" fill="#fff" fillRule="evenodd" stroke="#46566e" strokeWidth=".5" /></Svg></WindowButton>
          <WindowButton $close aria-label="关闭"><Svg w={12} h={12}><path d="M1 1h3l2 3 2-3h3L8 6l3 5H8L6 8l-2 3H1l3-5z" fill="#fff" stroke="#6a3a36" strokeWidth=".5" /></Svg></WindowButton>
        </WindowButtons>
      </TitleBar>

      <TabRow>
        {["开始", "插入", "页面布局", "公式", "数据", "审阅", "视图", "开发工具"].map((t) => <Tab key={t} $active={t === "插入"}>{t}</Tab>)}
        <ContextTabs>{["设计", "布局", "格式"].map((t) => <Tab key={t}>{t}</Tab>)}</ContextTabs>
        <TabTools>
          <PlainButton aria-label="帮助"><Svg s={14}><circle cx="7" cy="7" r="6.500" fill="#2b5cc8" stroke="#e4eeff" /><text x="7" y="11" textAnchor="middle" fontFamily="Open Sans" fontWeight="700" fontSize="10" fill="#fff">?</text></Svg></PlainButton>
          <PlainButton aria-label="最小化窗口"><Svg s={14}><path d="M3 9h8v2H3z" fill="#65779a" /></Svg></PlainButton>
          <PlainButton aria-label="还原窗口"><Svg s={14}><path d="M4.500 3.500h8v5M2.500 5.500h7v5h-7zM2 6h8M4 3h9" fill="none" stroke="#65779a" /></Svg></PlainButton>
          <PlainButton aria-label="关闭窗口"><Svg s={14}><path d="M4 3l7 8M11 3l-7 8" stroke="#65779a" strokeWidth="2" /></Svg></PlainButton>
        </TabTools>
      </TabRow>

      <Ribbon>
        {groups.map((g) => (
          <Group key={g.name} $hot={g.hot}>
            <GroupBody>{g.items.map((b) => <RibbonButton key={b.icon} b={b} />)}</GroupBody>
            <GroupName $hot={g.hot}>
              {g.name}
              {g.hot && <Launcher aria-label="图表选项"><Svg s={9}><path d="M.5 6V.5H6M3 3l4 4M8 4v4H4" fill="none" stroke="#5c7fb4" /></Svg></Launcher>}
            </GroupName>
          </Group>
        ))}
        <Group>
          <GroupBody>
            <Symbols>
              {["，", "。", "、", "；", "：", "？"].map((s) => <PlainButton key={s}>{s}</PlainButton>)}
              <SymbolMenu><Svg w={10} h={12}><path d="M2 5a3 3 0 1 1 5 2q-1 3-4 4 2-2 1-3Q2 8 2 5z" fill="#000" /></Svg>符号<Caret /></SymbolMenu>
            </Symbols>
          </GroupBody>
          <GroupName>特殊符号</GroupName>
        </Group>
      </Ribbon>

      <FormulaBar>
        <NameBox aria-label="名称框" defaultValue="图表 2" />
        <QuickButton aria-label="名称列表"><Caret $dark /></QuickButton>
        <FxStrip><Knob /><Fx aria-label="插入函数">fx</Fx></FxStrip>
        <FormulaInput aria-label="编辑栏" />
        <Expand aria-label="展开编辑栏"><Svg s={9}><path d="M1 1l3.500 3L8 1M1 5l3.500 3L8 5" fill="none" stroke="#111" strokeWidth="1.500" /></Svg></Expand>
      </FormulaBar>

      <Work>
        <Sheet>
          <Grid>
            <colgroup>
              <col style={{ width: 48 }} />
              {columns.map(([l, w]) => <col key={l} style={{ width: w }} />)}
              <col />
            </colgroup>
            <thead>
              <tr><Corner aria-label="全选" />{columns.map(([l]) => <ColHead key={l} scope="col">{l}</ColHead>)}<ColHead /></tr>
            </thead>
            <tbody>
              <Row $h={46}><RowHead scope="row">1</RowHead><Cell /><Cell colSpan={4} $kind="title">2018年1季度利润表</Cell><Blank n={12} /></Row>
              <Row $h={40}>
                <RowHead scope="row">2</RowHead><Cell /><Cell $kind="head">项目</Cell>
                {months.map((m) => <Cell key={m} $kind="head">{m}</Cell>)}<Blank n={12} />
              </Row>
              {profit.map(([name, values], r) => (
                <Row key={name} $h={46}>
                  <RowHead scope="row">{r + 3}</RowHead><Cell /><Cell $kind="data">{name}</Cell>
                  {values.map((v, i) => <Cell key={i} $kind="data">{v}</Cell>)}<Blank n={12} />
                </Row>
              ))}
              {Array.from({ length: 14 }, (_, i) => <Row key={i} $h={35}><RowHead scope="row">{i + 8}</RowHead><Blank n={17} /></Row>)}
            </tbody>
          </Grid>
          <RangeFrame $x={66} $y={74} $w={565} $h={42} $line="#2a9cc0" $handle="transparent" />
          <RangeFrame $x={207} $y={74} $w={424} $h={42} $line="#1f8a4c" $handle="#0a7d12" />
          <RangeFrame $x={66} $y={114} $w={142} $h={232} $line="#7a2fc0" $handle="#9a10c0" />
          <RangeFrame $x={207} $y={114} $w={424} $h={232} $line="#1a3fd0" $handle="#0000f0" />
          <ChartFrame><Chart /></ChartFrame>
        </Sheet>
        <VScroll>
          <SplitBox><Svg w={8} h={1}><path d="M0 0h8v1H0z" fill="#5c7dab" /></Svg></SplitBox>
          <ScrollArrow aria-label="向上滚动"><Tri d="M0 7h10L5 2z" /></ScrollArrow>
          <VTrack><VThumb><Svg s={8}><path d="M0 1h8M0 3h8M0 5h8M0 7h8" stroke="#7e8fa9" /></Svg></VThumb></VTrack>
          <ScrollArrow aria-label="向下滚动"><Tri d="M1 3h8L5 7z" /></ScrollArrow>
        </VScroll>
      </Work>

      <Bottom>
        <TabNav>
          {["M1 2h1v7H1zM7 2v7L3 5.500z", "M7 2v7L3 5.500z", "M3 2v7l4-3.500z", "M8 2h1v7H8zM3 2v7l4-3.500z"].map((d) => (
            <PlainButton key={d} aria-label="工作表导航"><Tri d={d} c="#16316a" /></PlainButton>
          ))}
        </TabNav>
        <SheetTabs>
          <SheetTab $w={55} $active>1季度</SheetTab>
          <SheetTab $w={37}>1月</SheetTab>
          <SheetTab $w={37}>2月</SheetTab>
          <SheetTab $w={37}>3月</SheetTab>
          <SheetTab $w={57}>Sheet3</SheetTab>
          <SheetTab $w={34} aria-label="插入工作表"><Svg s={15}><path d="M5 4h8v6l-3 3H5z" fill="#fff" stroke="#5a78ac" /><path d="M4 0l1 3 3-1-2 3 2 2-3 0-1 2-1-2-3 1 2-3-2-2h3z" fill="#f0a030" /></Svg></SheetTab>
        </SheetTabs>
        <HScroll>
          <SplitBox $side><Svg w={1} h={7}><path d="M0 0h1v7H0z" fill="#5c7dab" /></Svg></SplitBox>
          <ScrollArrow aria-label="向左滚动"><Tri d="M7 1v8L3 5z" /></ScrollArrow>
          <HTrack><HThumb><Svg s={8}><path d="M1 0v8M3 0v8M5 0v8M7 0v8" stroke="#7e8fa9" /></Svg></HThumb></HTrack>
          <ScrollArrow aria-label="向右滚动"><Tri d="M3 1v8l4-4z" /></ScrollArrow>
          <SplitBox $side><Svg w={1} h={7}><path d="M0 0h1v7H0z" fill="#5c7dab" /></Svg></SplitBox>
        </HScroll>
      </Bottom>

      <StatusBar>
        <StatusCell $w={41}>就绪</StatusCell>
        <StatusCell $w={33}><Svg s={16}><path d="M2.500 2.500h12v11h-12z" fill="#fff" stroke="#3f62a4" /><path d="M3 6h12M3 9h12M3 11.500h12M7 3v11M11 3v11" stroke="#7f9acb" /><path d="M2 2h13v3H2z" fill="#4a6fb4" /><circle cx="3.500" cy="3.500" r="3" fill="#d8442c" /></Svg></StatusCell>
        <Totals><Total>平均值: 80</Total><Total $gap={75}>计数: 24</Total><Total $gap={18}>求和: 1200</Total></Totals>
        <ZoomArea>
          <Views>
            <ViewButton $on aria-label="普通"><Svg w={13} h={11}><path d="M.5.5h12v10H.5zM0 4h13M0 7.500h13M4.500 0v11M8.500 0v11" fill="none" stroke="#5a6b88" /></Svg></ViewButton>
            <ViewButton aria-label="页面布局"><Svg w={13} h={12}><path d="M.5.5h12v11H.5z" fill="#b9c3d2" stroke="#5a6b88" /><path d="M3.500 2.500h6v7h-6z" fill="#fff" stroke="#5a6b88" /></Svg></ViewButton>
            <ViewButton aria-label="分页预览"><Svg w={13} h={12}><path d="M.5.5h12v11H.5z" fill="#b9c3d2" stroke="#5a6b88" /><path d="M2.500.5h3v7h-3zM7.500.5h3v7h-3z" fill="#fff" stroke="#5a6b88" /></Svg></ViewButton>
          </Views>
          <Percent>160%</Percent>
          <PlainButton aria-label="缩小"><Svg s={16}><circle cx="8" cy="8" r="7" fill="#e9f0fa" stroke="#5c7cab" /><path d="M4 7h8v2H4z" fill="#3f5a86" /></Svg></PlainButton>
          <Slider type="range" aria-label="显示比例" min={0} max={100} defaultValue={59} />
          <PlainButton aria-label="放大"><Svg s={16}><circle cx="8" cy="8" r="7" fill="#e9f0fa" stroke="#5c7cab" /><path d="M4 7h8v2H4zM7 4h2v8H7z" fill="#3f5a86" /></Svg></PlainButton>
        </ZoomArea>
      </StatusBar>

      <TaskBar>
        <TaskIcon $w={54} aria-label="开始菜单"><Flag /></TaskIcon>
        <TaskIcon $w={68} aria-label="搜狗浏览器"><Sogou s={30} /></TaskIcon>
        <TaskButton><Recorder />正在录课</TaskButton>
        <TaskIcon $w={58} aria-label="酷我"><Kuwo s={32} /></TaskIcon>
        <TaskIcon $w={66} aria-label="爱奇艺"><Iqiyi s={32} /></TaskIcon>
        <TaskButton><OfficeDoc c="#d9502b" kind="p" />Microsoft Powe...</TaskButton>
        <TaskButton $on><OfficeDoc c="#4f9a3c" kind="x" />Microsoft Excel ...</TaskButton>
        <TaskButton><Folder />Excel基础版</TaskButton>
        <Streak />
        <Tray>
          <InputMethod aria-label="输入法"><Svg s={16}><path d="M1 2l13-2 2 13-13 3z" fill="#ee4e22" /><path d="M12 4.500Q5 3 5 6t6 2q2 4-6 4" fill="none" stroke="#fff" strokeWidth="2.200" /></Svg></InputMethod>
          <Iqiyi s={16} />
          <Kuwo s={16} />
          <Svg s={16}><path d="M3 1h6v5H3zM1 6h9v8H1z" fill="#8d99a8" /><circle cx="11" cy="11" r="5" fill="#3fae3a" /><path d="M8 11l2 2 4-4" fill="none" stroke="#fff" strokeWidth="1.500" /></Svg>
          <Svg s={16}><path d="M1 6h4l6-5v14l-6-5H1z" fill="#d8422c" stroke="#f0c0b4" /><path d="M13 4v8" stroke="#7a3038" /></Svg>
          <Svg s={16}><path d="M5.500 4.500h10v7h-10zM8 14.500h6M11 12v2M1 2v4h4V2M2 0v2M4 0v2M3 6v8h3" fill="none" stroke="#fff" strokeWidth="1.200" /></Svg>
          <Svg s={16}><path d="M1 5h3l4-4v14l-4-4H1z" fill="#fff" /><path d="M10 5q2 3 0 6M12 3q4 5 0 10" fill="none" stroke="#fff" /></Svg>
          <Clock>15:27<br />2018-10-19</Clock>
        </Tray>
        <ShowDesktop aria-label="显示桌面" />
      </TaskBar>
    </Screen>
  );
}
